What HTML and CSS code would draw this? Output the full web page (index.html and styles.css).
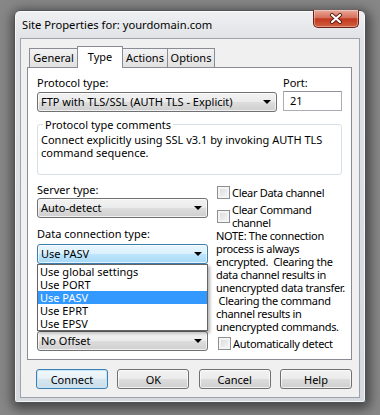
FILE: index.html
```html
<!DOCTYPE html>
<html>

<head>
    <meta charset="utf-8" />
    <title>Site Properties</title>
    <link rel="stylesheet" href="styles.css">
</head>

<body>
    <div class="window">
        <div class="titlebar">
            <span class="title">Site Properties for: yourdomain.com</span>
            <button class="close-btn">
                <svg width="14" height="11" viewBox="0 0 14 11">
                    <path d="M3 2 L11 9 M11 2 L3 9" stroke="#5a1a10" stroke-width="4" stroke-linecap="round" />
                    <path d="M3 2 L11 9 M11 2 L3 9" stroke="#ffffff" stroke-width="2.2" stroke-linecap="round" />
                </svg>
            </button>
        </div>

        <div class="client">
            <div class="tabs">
                <div class="tab tab-general">General</div>
                <div class="tab tab-type active">Type</div>
                <div class="tab tab-actions">Actions</div>
                <div class="tab tab-options">Options</div>
            </div>

            <div class="panel">
                <div class="top-row">
                    <div class="field protocol">
                        <label>Protocol type:</label>
                        <div class="combo">FTP with TLS/SSL (AUTH TLS - Explicit)<span class="arrow"></span></div>
                    </div>
                    <div class="field port">
                        <label>Port:</label>
                        <div class="textbox">21</div>
                    </div>
                </div>

                <fieldset class="comments">
                    <legend>Protocol type comments</legend>
                    Connect explicitly using SSL v3.1 by invoking AUTH TLS<br>command sequence.
                </fieldset>

                <div class="lower">
                    <div class="left-col">
                        <label class="server-label">Server type:</label>
                        <div class="combo server-combo">Auto-detect<span class="arrow"></span></div>

                        <label class="data-label">Data connection type:</label>
                        <div class="combo-wrap">
                            <div class="combo focused">Use PASV<span class="arrow"></span></div>
                            <ul class="dropdown">
                                <li>Use global settings</li>
                                <li>Use PORT</li>
                                <li class="selected">Use PASV</li>
                                <li>Use EPRT</li>
                                <li>Use EPSV</li>
                            </ul>
                        </div>

                        <div class="combo offset-combo">No Offset<span class="arrow"></span></div>
                    </div>

                    <div class="right-col">
                        <div class="check-row first">
                            <span class="check"></span>
                            <span>Clear Data channel</span>
                        </div>
                        <div class="check-row second">
                            <span class="check"></span>
                            <span>Clear Command<br>channel</span>
                        </div>
                        <div class="note">NOTE: The connection
process is always
encrypted.  Clearing the
data channel results in
unencrypted data transfer.
 Clearing the command
channel results in
unencrypted commands.</div>
                        <div class="check-row auto">
                            <span class="check"></span>
                            <span>Automatically detect</span>
                        </div>
                    </div>
                </div>
            </div>

            <div class="buttons">
                <button class="btn default">Connect</button>
                <button class="btn">OK</button>
                <button class="btn">Cancel</button>
                <button class="btn">Help</button>
            </div>
        </div>
    </div>
</body>

</html>
```

FILE: styles.css
```css
* {
    box-sizing: border-box;
}

body {
    margin: 0;
    width: 380px;
    height: 415px;
    overflow: hidden;
    background-color: #878787;
    font-family: 'Noto Sans', 'Open Sans', sans-serif;
    font-size: 11px;
    color: #000;
}

.window {
    margin: 10px 0 0 14px;
    width: 352px;
    height: 393px;
    border: 1px solid #505459;
    border-radius: 6px 6px 3px 3px;
    background: linear-gradient(#eef0f2, #dfe2e6 30px, #d6dade);
    box-shadow: 1px 3px 12px 3px rgba(0, 0, 0, 0.5), inset 0 0 0 1px rgba(255, 255, 255, 0.7);
    display: flex;
    flex-direction: column;
}

.titlebar {
    height: 27px;
    flex-shrink: 0;
    display: flex;
    align-items: flex-start;
}

.title {
    align-self: center;
    padding-left: 7px;
    font-size: 11.2px;
}

.close-btn {
    margin: -1px 6px 0 auto;
    width: 46px;
    height: 18px;
    padding: 0;
    border: 1px solid #6e2118;
    border-top: none;
    border-radius: 0 0 5px 5px;
    background: linear-gradient(#e9a99b, #d7705b 45%, #c2381f 52%, #d0603f);
    box-shadow: inset 0 0 0 1px rgba(255, 255, 255, 0.35);
    display: flex;
    align-items: center;
    justify-content: center;
}

.client {
    margin: 0 5px;
    height: 360px;
    border: 1px solid #9da3ab;
    background-color: #f0f0f0;
    padding: 7px 7px 0 6px;
}

/* tabs */
.tabs {
    display: flex;
    align-items: flex-end;
    height: 21px;
    padding-left: 2px;
}

.tab {
    height: 19px;
    line-height: 18px;
    text-align: center;
    border: 1px solid #898c95;
    border-bottom: none;
    background: linear-gradient(#f3f3f3, #e9e9e9 50%, #e1e1e1);
    margin-left: -1px;
}

.tab-general {
    width: 49px;
    margin-left: 0;
}

.tab-type {
    width: 46px;
}

.tab-actions {
    width: 46px;
}

.tab-options {
    width: 48px;
}

.tab.active {
    height: 22px;
    line-height: 20px;
    background: #fff;
    margin-bottom: -1px;
    position: relative;
    z-index: 1;
}

.panel {
    height: 293px;
    border: 1px solid #898c95;
    background-color: #fff;
    padding: 7px 9px 0 9px;
}

label {
    display: block;
    line-height: 15px;
}

.top-row {
    display: flex;
    gap: 6px;
}

.protocol {
    width: 240px;
}

.port {
    width: 59px;
}

/* combo boxes */
.combo {
    position: relative;
    height: 20px;
    margin-top: 2px;
    padding-left: 3px;
    line-height: 18px;
    border: 1px solid #707070;
    border-radius: 3px;
    background: linear-gradient(#f2f2f2, #ebebeb 50%, #dddddd 50%, #cfcfcf);
    box-shadow: inset 0 0 0 1px rgba(255, 255, 255, 0.7);
}

.combo.focused {
    border-color: #3c7fb1;
    background: linear-gradient(#eaf6fd, #d9f0fc 50%, #bee6fd 50%, #a7d9f5);
}

.arrow {
    position: absolute;
    right: 5px;
    top: 7px;
    width: 0;
    height: 0;
    border-left: 4px solid transparent;
    border-right: 4px solid transparent;
    border-top: 4px solid #000;
}

.textbox {
    height: 20px;
    margin-top: 1px;
    padding-left: 6px;
    line-height: 18px;
    border: 1px solid #abadb3;
    border-top-color: #8f9399;
    background-color: #fff;
}

.comments {
    margin: 6px 0 0;
    width: 305px;
    padding: 2px 3px 15px;
    line-height: 13px;
    border: 1px solid #d5dfe5;
    border-radius: 3px;
}

.comments legend {
    margin-left: 2px;
    padding: 0 2px;
    line-height: 13px;
}

/* lower part */
.lower {
    display: flex;
    gap: 8px;
}

.left-col {
    width: 171px;
    flex-shrink: 0;
}

.server-label {
    margin-top: 7px;
}

.server-combo {
    margin-top: 1px;
}

.data-label {
    margin-top: 8px;
}

.combo-wrap {
    position: relative;
    margin-top: 3px;
}

.combo-wrap .combo {
    margin-top: 0;
}

.dropdown {
    position: absolute;
    top: 100%;
    left: 0;
    width: 171px;
    margin: 0;
    padding: 0;
    list-style: none;
    border: 1px solid #646464;
    background-color: #fff;
    box-shadow: 2px 2px 3px rgba(0, 0, 0, 0.3);
    z-index: 2;
}

.dropdown li {
    height: 13px;
    line-height: 13px;
    padding-left: 2px;
}

.dropdown li.selected {
    background-color: #3399ff;
    color: #fff;
}

.offset-combo {
    margin-top: 67px;
}

.right-col {
    flex: 1;
    min-width: 0;
    white-space: nowrap;
    letter-spacing: -0.3px;
}

.check-row {
    display: flex;
    align-items: center;
    gap: 2px;
    padding-left: 1px;
    line-height: 13px;
}

.check-row.first {
    margin-top: 11px;
}

.check-row.second {
    margin-top: 4px;
}

.check-row.auto {
    margin-top: 4px;
    padding-left: 2px;
}

.check {
    flex-shrink: 0;
    width: 13px;
    height: 13px;
    border: 1px solid #8e8f8f;
    background: linear-gradient(135deg, #d6d9dd, #f7f7f7);
    box-shadow: inset 0 0 0 2px #f4f4f4;
}

.note {
    white-space: pre;
    line-height: 13px;
}

/* bottom buttons */
.buttons {
    display: flex;
    justify-content: space-between;
    width: 316px;
    margin: 9px 0 0 9px;
}

.btn {
    width: 72px;
    height: 20px;
    padding: 0;
    font: inherit;
    color: #000;
    border: 1px solid #707070;
    border-radius: 3px;
    background: linear-gradient(#f2f2f2, #ebebeb 50%, #dddddd 50%, #cfcfcf);
    box-shadow: inset 0 0 0 1px rgba(255, 255, 255, 0.7);
}

.btn.default {
    border-color: #3c7fb1;
    background: linear-gradient(#f2f8fb, #e5f0f6 50%, #d6e6ef 50%, #cadfea);
    box-shadow: inset 0 0 0 1px #c6e6f7;
}
```
